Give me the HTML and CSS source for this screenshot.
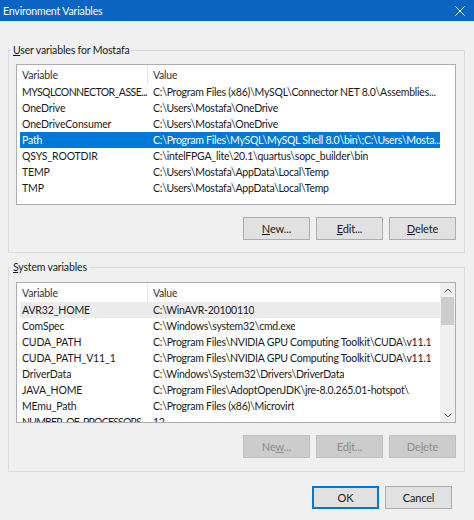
FILE: index.html
```html
<!DOCTYPE html>
<html lang="en">
<head>
    <meta charset="UTF-8">
    <title>Environment Variables</title>
    <link rel="stylesheet" href="styles.css">
</head>
<body>
    <div class="window">
        <div class="titlebar">
            <span class="title">Environment Variables</span>
            <svg class="close" width="10" height="10" viewBox="0 0 10 10">
                <path d="M0.5 0.5 L9.5 9.5 M9.5 0.5 L0.5 9.5" stroke="#fff" stroke-width="1" fill="none"/>
            </svg>
        </div>

        <div class="content">
            <!-- user variables -->
            <fieldset class="group">
                <legend><u>U</u>ser variables for Mostafa</legend>
                <div class="list">
                    <div class="list-main">
                        <div class="list-head">
                            <span class="c1">Variable</span>
                            <span class="c2">Value</span>
                        </div>
                        <div class="list-body">
                            <div class="row"><span class="c1 tight">MYSQLCONNECTOR_ASSE...</span><span class="c2">C:\Program Files (x86)\MySQL\Connector NET 8.0\Assemblies...</span></div>
                            <div class="row"><span class="c1">OneDrive</span><span class="c2">C:\Users\Mostafa\OneDrive</span></div>
                            <div class="row"><span class="c1">OneDriveConsumer</span><span class="c2">C:\Users\Mostafa\OneDrive</span></div>
                            <div class="row selected"><span class="c1">Path</span><span class="c2">C:\Program Files\MySQL\MySQL Shell 8.0\bin\;C:\Users\Mosta...</span></div>
                            <div class="row"><span class="c1">QSYS_ROOTDIR</span><span class="c2">C:\intelFPGA_lite\20.1\quartus\sopc_builder\bin</span></div>
                            <div class="row"><span class="c1">TEMP</span><span class="c2">C:\Users\Mostafa\AppData\Local\Temp</span></div>
                            <div class="row"><span class="c1">TMP</span><span class="c2">C:\Users\Mostafa\AppData\Local\Temp</span></div>
                        </div>
                    </div>
                    <div class="list-gutter"></div>
                </div>
                <div class="buttons">
                    <button class="btn"><u>N</u>ew...</button>
                    <button class="btn"><u>E</u>dit...</button>
                    <button class="btn"><u>D</u>elete</button>
                </div>
            </fieldset>

            <!-- system variables -->
            <fieldset class="group group-system">
                <legend><u>S</u>ystem variables</legend>
                <div class="list">
                    <div class="list-main">
                        <div class="list-head">
                            <span class="c1">Variable</span>
                            <span class="c2">Value</span>
                        </div>
                        <div class="list-body">
                            <div class="row hover"><span class="c1">AVR32_HOME</span><span class="c2">C:\WinAVR-20100110</span></div>
                            <div class="row"><span class="c1">ComSpec</span><span class="c2">C:\Windows\system32\cmd.exe</span></div>
                            <div class="row"><span class="c1">CUDA_PATH</span><span class="c2">C:\Program Files\NVIDIA GPU Computing Toolkit\CUDA\v11.1</span></div>
                            <div class="row"><span class="c1">CUDA_PATH_V11_1</span><span class="c2">C:\Program Files\NVIDIA GPU Computing Toolkit\CUDA\v11.1</span></div>
                            <div class="row"><span class="c1">DriverData</span><span class="c2">C:\Windows\System32\Drivers\DriverData</span></div>
                            <div class="row"><span class="c1">JAVA_HOME</span><span class="c2">C:\Program Files\AdoptOpenJDK\jre-8.0.265.01-hotspot\</span></div>
                            <div class="row"><span class="c1">MEmu_Path</span><span class="c2">C:\Program Files (x86)\Microvirt</span></div>
                            <div class="row"><span class="c1 tighter">NUMBER_OF_PROCESSORS</span><span class="c2">12</span></div>
                        </div>
                    </div>
                    <div class="scrollbar">
                        <div class="arrow">
                            <svg width="8" height="5" viewBox="0 0 8 5"><path d="M0.5 4.5 L4 1 L7.5 4.5" stroke="#606060" fill="none"/></svg>
                        </div>
                        <div class="thumb"></div>
                        <div class="track"></div>
                        <div class="arrow">
                            <svg width="8" height="5" viewBox="0 0 8 5"><path d="M0.5 0.5 L4 4 L7.5 0.5" stroke="#606060" fill="none"/></svg>
                        </div>
                    </div>
                </div>
                <div class="buttons">
                    <button class="btn" disabled>Ne<u>w</u>...</button>
                    <button class="btn" disabled>Ed<u>i</u>t...</button>
                    <button class="btn" disabled>De<u>l</u>ete</button>
                </div>
            </fieldset>

            <div class="dialog-buttons">
                <button class="btn btn-default">OK</button>
                <button class="btn">Cancel</button>
            </div>
        </div>
    </div>
</body>
</html>
```

FILE: styles.css
```css
:root {
    --accent: #0078d7;
    --title-bg: #0a64c2;
    --face: #f0f0f0;
    --text: #1a1a1a;
}

body {
    margin: 0;
    background: var(--face);
    font-family: Lato, "Noto Sans", sans-serif;
    font-size: 10.5px;
    letter-spacing: -0.15px;
    color: var(--text);
}

.window {
    width: 474px;
    height: 520px;
    background: var(--face);
    overflow: hidden;
}

.titlebar {
    height: 21px;
    background: var(--title-bg);
    color: #fff;
    display: flex;
    align-items: center;
    justify-content: space-between;
    padding: 0 9px 0 3px;
}

.close {
    display: block;
}

.content {
    padding: 21px 9px 0 8px;
}

.group {
    margin: 0;
    padding: 6px 8px 12px 7px;
    min-width: 0;
    border: 1px solid #dcdcdc;
}

.group legend {
    padding: 0 2px;
    margin-left: -5px;
    line-height: 16px;
}

.group-system {
    margin-top: 6px;
    padding-top: 7px;
    padding-bottom: 13px;
}

.list {
    height: 141px;
    box-sizing: border-box;
    border: 1px solid #abadb3;
    background: #fff;
    display: flex;
    overflow: hidden;
}

.list-main {
    flex: 1;
    min-width: 0;
    padding-left: 3px;
}

.list-gutter {
    width: 15px;
}

.list-head {
    height: 19px;
    display: flex;
    align-items: center;
    color: #333;
}

.list-head .c1 {
    border-right: 1px solid #e5e5e5;
    height: 100%;
    display: flex;
    align-items: center;
}

.row {
    display: flex;
    height: 16px;
    line-height: 16px;
    white-space: nowrap;
}

.c1 {
    width: 128px;
    flex: none;
    box-sizing: border-box;
    padding-left: 2px;
    overflow: hidden;
}

.c1.tight {
    letter-spacing: -0.55px;
}

.c1.tighter {
    letter-spacing: -0.8px;
}

.c2 {
    padding-left: 5px;
    overflow: hidden;
    letter-spacing: -0.25px;
}

.row.selected {
    background: var(--accent);
    color: #fff;
}

.row.hover {
    background: #ececec;
}

.scrollbar {
    width: 15px;
    background: var(--face);
    display: flex;
    flex-direction: column;
}

.scrollbar .arrow {
    height: 14px;
    display: flex;
    align-items: center;
    justify-content: center;
}

.scrollbar .thumb {
    height: 28px;
    margin: 0 1px;
    background: #cdcdcd;
}

.scrollbar .track {
    flex: 1;
}

.buttons {
    display: flex;
    justify-content: flex-end;
    gap: 6px;
    margin-top: 12px;
}

.btn {
    width: 67px;
    height: 23px;
    box-sizing: border-box;
    border: 1px solid #adadad;
    background: #e1e1e1;
    font-family: inherit;
    font-size: 11px;
    letter-spacing: inherit;
    color: var(--text);
    padding: 0;
}

.btn:disabled {
    background: #cccccc;
    border-color: #bfbfbf;
    color: #8d8d8d;
}

.btn-default {
    border: 2px solid var(--accent);
}

.dialog-buttons {
    display: flex;
    justify-content: flex-end;
    gap: 6px;
    margin-top: 14px;
    padding-right: 13px;
}
```
